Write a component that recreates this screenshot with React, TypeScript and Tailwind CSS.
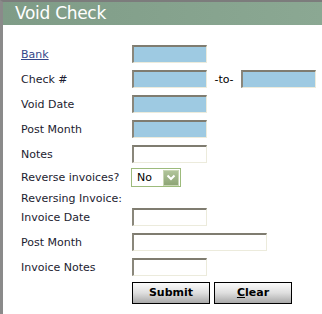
import { useState } from 'react';

const labelCls = 'w-[111px] shrink-0 text-[11px] leading-none text-[#1c1c30]';
const inputBase =
  'h-[18px] border-t-2 border-l-2 border-r border-b border-t-[#7f7c70] border-l-[#8a877b] border-r-[#ecebdc] border-b-[#ecebdc] px-1 text-[11px] outline-none';

const Row = ({ label, children, link }: { label: string; children: React.ReactNode; link?: boolean }) => (
  <div className="flex h-[25px] items-start">
    <div className="flex h-[18px] w-[111px] shrink-0 items-center">
      {link ? (
        <a href="#" className="text-[11px] leading-none text-[#34478a] underline">
          {label}
        </a>
      ) : (
        <span className={labelCls}>{label}</span>
      )}
    </div>
    {children}
  </div>
);

const App = () => {
  const [reverse, setReverse] = useState('No');

  return (
    <div
      className="h-[314px] w-[322px] border-t-2 border-l-[3px] border-t-[#7c7c7c] border-l-[#8a8a8a] bg-white"
      style={{ fontFamily: '"DejaVu Sans", Verdana, sans-serif' }}
    >
      <div className="flex h-[23px] items-center bg-gradient-to-r from-[#7f9c87] to-[#8ba893] pl-3">
        <h1 className="text-[17px] leading-none tracking-[-0.3px] text-white">Void Check</h1>
      </div>

      <div className="pt-5 pl-[18px]">
        <Row label="Bank" link>
          <input className={`${inputBase} w-[75px] bg-[#9ecae2]`} />
        </Row>
        <Row label="Check #">
          <input className={`${inputBase} w-[75px] bg-[#9ecae2]`} />
          <span className="flex h-[18px] w-[34px] items-center justify-center text-[11px] leading-none text-black">
            -to-
          </span>
          <input className={`${inputBase} w-[75px] bg-[#9ecae2]`} />
        </Row>
        <Row label="Void Date">
          <input className={`${inputBase} w-[75px] bg-[#9ecae2]`} />
        </Row>
        <Row label="Post Month">
          <input className={`${inputBase} w-[75px] bg-[#9ecae2]`} />
        </Row>
        <div className="flex h-[23px] items-start">
          <div className="flex h-[18px] w-[111px] shrink-0 items-center">
            <span className={labelCls}>Notes</span>
          </div>
          <input className={`${inputBase} w-[75px] bg-white`} />
        </div>
        <div className="flex h-[21px] items-start">
          <div className="flex h-[19px] w-[110px] shrink-0 items-center">
            <span className={labelCls}>Reverse invoices?</span>
          </div>
          <div className="flex h-[19px] w-[50px] items-center border border-[#9dbb7c] bg-white pl-[5px] pr-px">
            <span className="flex-1 text-[11px] leading-none text-black">{reverse}</span>
            <button
              onClick={() => setReverse(reverse === 'No' ? 'Yes' : 'No')}
              className="flex h-[16px] w-[16px] items-center justify-center border border-[#c8d6b4] bg-gradient-to-b from-[#b0c49a] to-[#8ea576]"
            >
              <svg width="10" height="7" viewBox="0 0 10 7">
                <path d="M1.5 1.5 L5 5 L8.5 1.5" stroke="white" strokeWidth="2" fill="none" />
              </svg>
            </button>
          </div>
        </div>
        <div className="flex h-[19px] items-center">
          <span className="text-[11px] leading-none text-[#1c1c30]">Reversing Invoice:</span>
        </div>
        <Row label="Invoice Date">
          <input className={`${inputBase} w-[75px] bg-white`} />
        </Row>
        <Row label="Post Month">
          <input className={`${inputBase} w-[135px] bg-white`} />
        </Row>
        <div className="flex h-[24px] items-start">
          <div className="flex h-[18px] w-[111px] shrink-0 items-center">
            <span className={labelCls}>Invoice Notes</span>
          </div>
          <input className={`${inputBase} w-[75px] bg-white`} />
        </div>
        <div className="flex gap-1 pl-[111px]">
          <button className="h-[22px] w-[78px] border border-black bg-gradient-to-b from-[#fbfbfb] via-[#dedede] to-[#a9a9a9] text-[11px] font-bold text-black">
            Submit
          </button>
          <button className="h-[22px] w-[78px] border border-black bg-gradient-to-b from-[#fbfbfb] via-[#dedede] to-[#a9a9a9] text-[11px] font-bold text-black">
            <span className="underline">C</span>lear
          </button>
        </div>
      </div>
    </div>
  );
};

export default App;
